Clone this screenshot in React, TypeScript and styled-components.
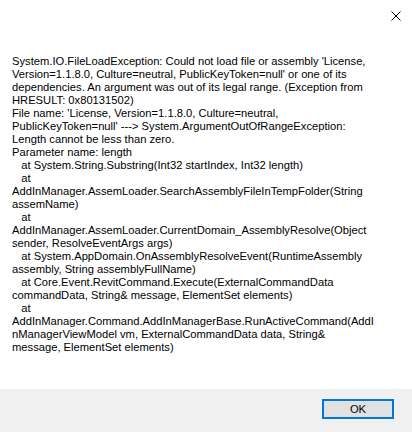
import styled, { createGlobalStyle } from "styled-components";

const GlobalStyle = createGlobalStyle`
  html, body {
    margin: 0;
    padding: 0;
    background: #ffffff;
  }
`;

const Dialog = styled.div`
  width: 412px;
  height: 432px;
  display: flex;
  flex-direction: column;
  background: #ffffff;
  font-family: "Liberation Sans", Arial, sans-serif;
  color: #000000;
  overflow: hidden;
`;

const TitleBar = styled.div`
  height: 30px;
  display: flex;
  justify-content: flex-end;
  align-items: center;
  padding-right: 11px;
`;

const CloseButton = styled.button`
  width: 10px;
  height: 10px;
  padding: 0;
  margin-top: 1px;
  border: none;
  background: transparent;
  display: grid;
  place-items: center;
  cursor: pointer;
`;

const Body = styled.div`
  flex: 1;
  padding: 25px 12px 0;
`;

const Message = styled.div`
  font-size: 11.2px;
  line-height: 13px;
  white-space: pre;
`;

const Footer = styled.div`
  height: 43px;
  background: #f0f0f0;
  display: flex;
  justify-content: flex-end;
  align-items: center;
  padding-right: 18px;
`;

const OkButton = styled.button`
  width: 72px;
  height: 20px;
  padding: 0;
  margin-top: -3px;
  border: 2px solid #0078d7;
  background: #e1e1e1;
  font-family: inherit;
  font-size: 11.2px;
  color: #000000;
`;

const lines = [
  "System.IO.FileLoadException: Could not load file or assembly 'License,",
  "Version=1.1.8.0, Culture=neutral, PublicKeyToken=null' or one of its",
  "dependencies. An argument was out of its legal range. (Exception from",
  "HRESULT: 0x80131502)",
  "File name: 'License, Version=1.1.8.0, Culture=neutral,",
  "PublicKeyToken=null' ---> System.ArgumentOutOfRangeException:",
  "Length cannot be less than zero.",
  "Parameter name: length",
  "   at System.String.Substring(Int32 startIndex, Int32 length)",
  "   at",
  "AddInManager.AssemLoader.SearchAssemblyFileInTempFolder(String",
  "assemName)",
  "   at",
  "AddInManager.AssemLoader.CurrentDomain_AssemblyResolve(Object",
  "sender, ResolveEventArgs args)",
  "   at System.AppDomain.OnAssemblyResolveEvent(RuntimeAssembly",
  "assembly, String assemblyFullName)",
  "   at Core.Event.RevitCommand.Execute(ExternalCommandData",
  "commandData, String& message, ElementSet elements)",
  "   at",
  "AddInManager.Command.AddInManagerBase.RunActiveCommand(AddI",
  "nManagerViewModel vm, ExternalCommandData data, String&",
  "message, ElementSet elements)",
];

export default function App() {
  return (
    <>
      <GlobalStyle />
      <Dialog>
        <TitleBar>
          <CloseButton aria-label="Close">
            <svg width="10" height="10" viewBox="0 0 10 10">
              <path d="M0.5 0.5 L9.5 9.5 M9.5 0.5 L0.5 9.5" stroke="#000" strokeWidth="1" />
            </svg>
          </CloseButton>
        </TitleBar>
        <Body>
          <Message>
            {lines.map((line, i) => (
              <div key={i}>{line}</div>
            ))}
          </Message>
        </Body>
        <Footer>
          <OkButton>OK</OkButton>
        </Footer>
      </Dialog>
    </>
  );
}
